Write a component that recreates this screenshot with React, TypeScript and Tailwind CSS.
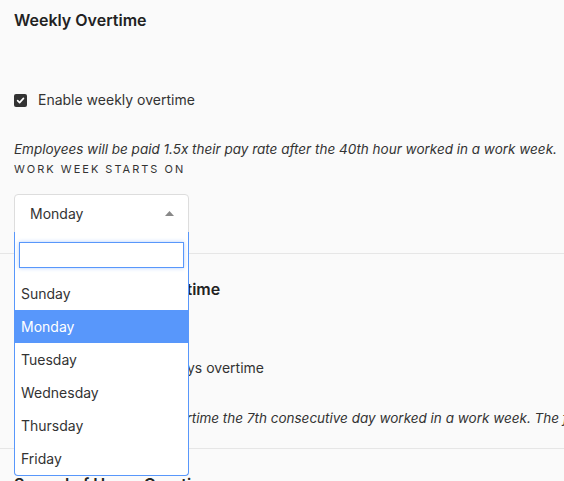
import React from "react";

function Check() {
  return (
    <span className="flex h-[13px] w-[13px] shrink-0 items-center justify-center rounded-[2px] bg-[#333]">
      <svg width="9" height="9" viewBox="0 0 10 10">
        <path d="M1.8 5.2 L4 7.4 L8.3 2.6" fill="none" stroke="#fff" strokeWidth="1.8" strokeLinecap="round" strokeLinejoin="round" />
      </svg>
    </span>
  );
}

const days = ["Sunday", "Monday", "Tuesday", "Wednesday", "Thursday", "Friday"];

export default function App() {
  return (
    <div className="h-[481px] w-[564px] overflow-hidden bg-[#fafafa] text-[#333]" style={{ fontFamily: "Inter, 'Noto Sans', sans-serif" }}>
      {/* Section 1 */}
      <div className="px-[14px] pt-[10px] pb-[20px]">
        <h2 className="text-[16px] font-semibold leading-[20px] text-[#222]">Weekly Overtime</h2>
        <label className="mt-[60px] flex items-center gap-[11px] text-[14px] leading-[20px]">
          <Check />
          <span>Enable weekly overtime</span>
        </label>
        <p className="mt-[29px] whitespace-nowrap text-[13.5px] italic leading-[20px]">
          Employees will be paid 1.5x their pay rate after the 40th hour worked in a work week.
        </p>
        <div className="text-[11px] uppercase leading-[20px] tracking-[2px]">Work week starts on</div>
        <div className="relative mt-[15px] w-[175px]">
          <div className="flex h-[39px] items-center justify-between rounded-t-[4px] border border-[#ddd] bg-white pl-[15px] pr-[14px] text-[14px]">
            <span>Monday</span>
            <svg width="9" height="5" viewBox="0 0 9 5">
              <path d="M0 5 L4.5 0 L9 5 Z" fill="#888" />
            </svg>
          </div>
          <div className="absolute left-0 top-[38px] z-10 w-[175px] rounded-b-[4px] border border-t-0 border-[#5897fb] bg-white">
            <div className="px-[4px] pt-[10px] pb-[9px]">
              <div className="h-[26px] border border-[#5897fb] bg-white shadow-[0_0_4px_rgba(88,151,251,0.45)]" />
            </div>
            {days.map((d) => (
              <div
                key={d}
                className={
                  "flex h-[33px] items-center px-[6px] text-[14px] " +
                  (d === "Monday" ? "bg-[#5897fb] text-white" : "text-[#333]")
                }
              >
                {d}
              </div>
            ))}
          </div>
        </div>
      </div>
      <div className="h-px bg-[#e6e6e6]" />
      {/* Section 2 */}
      <div className="px-[14px] pt-[25px] pb-[20px]">
        <h2 className="text-[16px] font-semibold leading-[20px] text-[#222]">Consecutive Day Overtime</h2>
        <label className="mt-[59px] flex items-center gap-[11px] text-[14px] leading-[20px]">
          <Check />
          <span>Enable consecutive days overtime</span>
        </label>
        <p className="mt-[30px] whitespace-nowrap text-[13.5px] italic leading-[20px]">
          Employees will be paid overtime the 7th consecutive day worked in a work week. The first 8 hours are paid at 1.5x.
        </p>
      </div>
      <div className="h-px bg-[#e6e6e6]" />
      <div className="px-[14px] pt-[25px]">
        <h2 className="text-[16px] font-semibold leading-[20px] text-[#222]">Spread of Hours Overtime</h2>
      </div>
    </div>
  );
}
